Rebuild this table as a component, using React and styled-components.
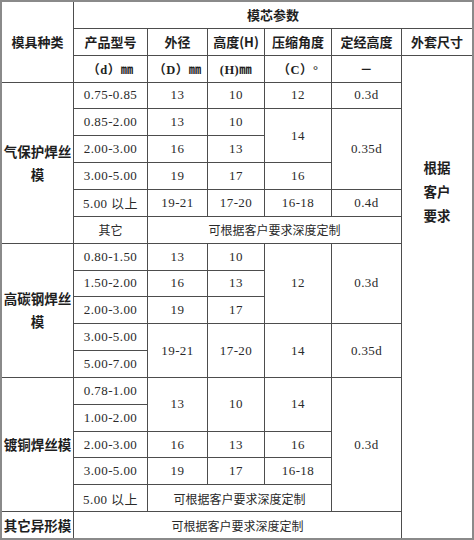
import React from "react";
import styled, { createGlobalStyle } from "styled-components";

const Global = createGlobalStyle`
  html, body { margin: 0; padding: 0; background: #ffffff; }
  * { box-sizing: border-box; }
`;

const Sheet = styled.div`
  width: 474px;
  height: 540px;
  border: 2px solid #8a8a8a;
  background: #4d4d4d;
  display: grid;
  grid-template-columns: 71px 73px 59px 56px 66px 69px 70px;
  grid-template-rows: repeat(20, 1fr);
  gap: 1px;
  color: #1e1e1e;
`;

const Cell = styled.div`
  grid-row: ${(p) => p.$r} / span ${(p) => p.$rs || 1};
  grid-column: ${(p) => p.$c} / span ${(p) => p.$cs || 1};
  background: #ffffff;
  display: flex;
  align-items: center;
  justify-content: center;
  text-align: center;
  white-space: nowrap;
  overflow: hidden;
`;

const Head = styled.span`
  font-family: "Noto Sans CJK SC", "Liberation Serif", serif;
  font-weight: 700;
  font-size: 13px;
  line-height: 1;
`;

const Unit = styled.span`
  font-family: "Liberation Serif", "Noto Sans CJK SC", serif;
  font-weight: 700;
  font-size: 12.5px;
  letter-spacing: 0.5px;
`;

const Num = styled.span`
  font-family: "Liberation Serif", "Noto Sans CJK SC", serif;
  font-size: 13px;
  letter-spacing: 0.4px;
  color: #2a2a2a;
`;

const Note = styled.span`
  font-family: "Noto Sans CJK SC", sans-serif;
  font-size: 12px;
  color: #2a2a2a;
`;

const Label = styled.span`
  font-family: "Noto Sans CJK SC", serif;
  font-weight: 700;
  font-size: 13.5px;
  line-height: 23px;
  white-space: pre-line;
`;

const SideCell = styled(Cell)`
  align-items: flex-start;
  padding-top: 99px;
`;

const SideText = styled.span`
  font-family: "Noto Sans CJK SC", serif;
  font-weight: 700;
  font-size: 13.5px;
  line-height: 24px;
  white-space: pre-line;
`;

const nums = [
  // 气保护焊丝模
  [4, 2, "0.75-0.85"], [4, 3, "13"], [4, 4, "10"], [4, 5, "12"], [4, 6, "0.3d"],
  [5, 2, "0.85-2.00"], [5, 3, "13"], [5, 4, "10"], [5, 5, "14", 2], [5, 6, "0.35d", 3],
  [6, 2, "2.00-3.00"], [6, 3, "16"], [6, 4, "13"],
  [7, 2, "3.00-5.00"], [7, 3, "19"], [7, 4, "17"], [7, 5, "16"],
  [8, 2, "5.00 以上"], [8, 3, "19-21"], [8, 4, "17-20"], [8, 5, "16-18"], [8, 6, "0.4d"],
  // 高碳钢焊丝模
  [10, 2, "0.80-1.50"], [10, 3, "13"], [10, 4, "10"], [10, 5, "12", 3], [10, 6, "0.3d", 3],
  [11, 2, "1.50-2.00"], [11, 3, "16"], [11, 4, "13"],
  [12, 2, "2.00-3.00"], [12, 3, "19"], [12, 4, "17"],
  [13, 2, "3.00-5.00"], [13, 3, "19-21", 2], [13, 4, "17-20", 2], [13, 5, "14", 2], [13, 6, "0.35d", 2],
  [14, 2, "5.00-7.00"],
  // 镀铜焊丝模
  [15, 2, "0.78-1.00"], [15, 3, "13", 2], [15, 4, "10", 2], [15, 5, "14", 2], [15, 6, "0.3d", 5],
  [16, 2, "1.00-2.00"],
  [17, 2, "2.00-3.00"], [17, 3, "16"], [17, 4, "13"], [17, 5, "16"],
  [18, 2, "3.00-5.00"], [18, 3, "19"], [18, 4, "17"], [18, 5, "16-18"],
  [19, 2, "5.00 以上"],
];

const notes = [
  [9, 2, "其它", 1],
  [9, 3, "可根据客户要求深度定制", 4],
  [19, 3, "可根据客户要求深度定制", 3],
  [20, 2, "可根据客户要求深度定制", 5],
];

const heads = ["产品型号", "外径", "高度(H)", "压缩角度", "定经高度", "外套尺寸"];
const units = ["（d）㎜", "（D）㎜", "(H)㎜", "（C）°", "－"];

const labels = [
  [4, 6, "气保护焊丝\n模"],
  [10, 5, "高碳钢焊丝\n模"],
  [15, 5, "镀铜焊丝模"],
  [20, 1, "其它异形模"],
];

export default function App() {
  return (
    <>
      <Global />
      <Sheet>
        <Cell $r={1} $c={1} $rs={3}>
          <Head>模具种类</Head>
        </Cell>
        <Cell $r={1} $c={2} $cs={6}>
          <Head>模芯参数</Head>
        </Cell>
        {heads.map((h, i) => (
          <Cell key={h} $r={2} $c={i + 2}>
            <Head>{h}</Head>
          </Cell>
        ))}
        {units.map((u, i) => (
          <Cell key={u} $r={3} $c={i + 2}>
            <Unit>{u}</Unit>
          </Cell>
        ))}
        <SideCell $r={3} $c={7} $rs={18}>
          <SideText>{"根据\n客户\n要求"}</SideText>
        </SideCell>
        {labels.map(([r, rs, t]) => (
          <Cell key={t} $r={r} $c={1} $rs={rs}>
            <Label>{t}</Label>
          </Cell>
        ))}
        {nums.map(([r, c, t, rs]) => (
          <Cell key={`${r}-${c}`} $r={r} $c={c} $rs={rs}>
            <Num>{t}</Num>
          </Cell>
        ))}
        {notes.map(([r, c, t, cs]) => (
          <Cell key={`n${r}-${c}`} $r={r} $c={c} $cs={cs}>
            <Note>{t}</Note>
          </Cell>
        ))}
      </Sheet>
    </>
  );
}
